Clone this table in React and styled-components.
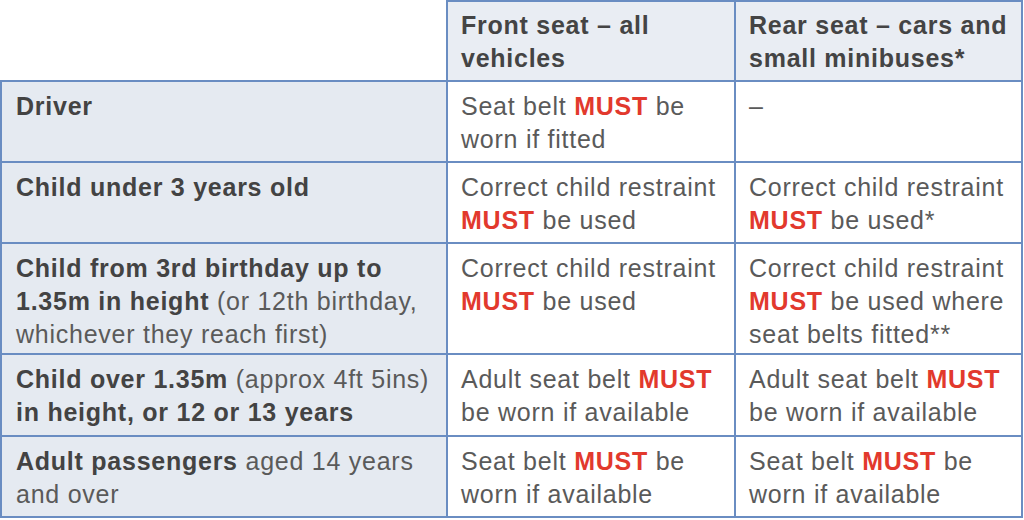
import React from 'react';
import styled, { createGlobalStyle } from 'styled-components';

const GlobalStyle = createGlobalStyle`
  html, body {
    margin: 0;
    padding: 0;
    background: #fff;
  }
  body {
    font-family: "Liberation Sans", Arial, Helvetica, sans-serif;
  }
`;

const BORDER = '#6a8dc2';

// rows: header, then the five passenger rows
const Grid = styled.div`
  display: grid;
  width: 1023px;
  grid-template-columns: 448px 288px 287px;
  grid-template-rows: 82px 81px 81px 111px 82px 81px;
  font-size: 25px;
  line-height: 33px;
  letter-spacing: 0.75px;
`;

const Cell = styled.div`
  box-sizing: border-box;
  padding: ${props => props.$head ? '7px' : '8px'} 10px 0 ${props => props.$first ? '14px' : '13px'};
  border-right: 2px solid ${BORDER};
  border-bottom: 2px solid ${BORDER};
  border-left: ${props => props.$first ? `2px solid ${BORDER}` : 'none'};
  border-top: ${props => props.$head ? `2px solid ${BORDER}` : 'none'};
  background: ${props => props.$head ? '#e9edf3' : props.$first ? '#e5eaf1' : '#fff'};
  color: #5a5a5a;
  font-weight: ${props => props.$head ? 'bold' : 'normal'};
  ${props => props.$head && 'color: #444;'}
`;

const Corner = styled.div`
  box-sizing: border-box;
  border-right: 2px solid ${BORDER};
  border-bottom: 2px solid ${BORDER};
  background: #fff;
`;

const Label = styled.span`
  font-weight: bold;
  color: #434343;
`;

const Must = styled.span`
  font-weight: bold;
  color: #e2392d;
`;

const rows = [
  {
    label: <Label>Driver</Label>,
    front: <>Seat belt <Must>MUST</Must> be<br />worn if fitted</>,
    rear: <>–</>,
  },
  {
    label: <Label>Child under 3 years old</Label>,
    front: <>Correct child restraint<br /><Must>MUST</Must> be used</>,
    rear: <>Correct child restraint<br /><Must>MUST</Must> be used*</>,
  },
  {
    label: <><Label>Child from 3rd birthday up to<br />1.35m in height</Label> (or 12th birthday,<br />whichever they reach first)</>,
    front: <>Correct child restraint<br /><Must>MUST</Must> be used</>,
    rear: <>Correct child restraint<br /><Must>MUST</Must> be used where<br />seat belts fitted**</>,
  },
  {
    label: <><Label>Child over 1.35m</Label> (approx 4ft 5ins)<br /><Label>in height, or 12 or 13 years</Label></>,
    front: <>Adult seat belt <Must>MUST</Must><br />be worn if available</>,
    rear: <>Adult seat belt <Must>MUST</Must><br />be worn if available</>,
  },
  {
    label: <><Label>Adult passengers</Label> aged 14 years<br />and over</>,
    front: <>Seat belt <Must>MUST</Must> be<br />worn if available</>,
    rear: <>Seat belt <Must>MUST</Must> be<br />worn if available</>,
  },
];

export default function App() {
  return (
    <>
      <GlobalStyle />
      <Grid>
        <Corner />
        <Cell $head>Front seat – all<br />vehicles</Cell>
        <Cell $head>Rear seat – cars and<br />small minibuses*</Cell>
        {rows.map((row, i) => (
          <React.Fragment key={i}>
            <Cell $first>{row.label}</Cell>
            <Cell>{row.front}</Cell>
            <Cell>{row.rear}</Cell>
          </React.Fragment>
        ))}
      </Grid>
    </>
  );
}
